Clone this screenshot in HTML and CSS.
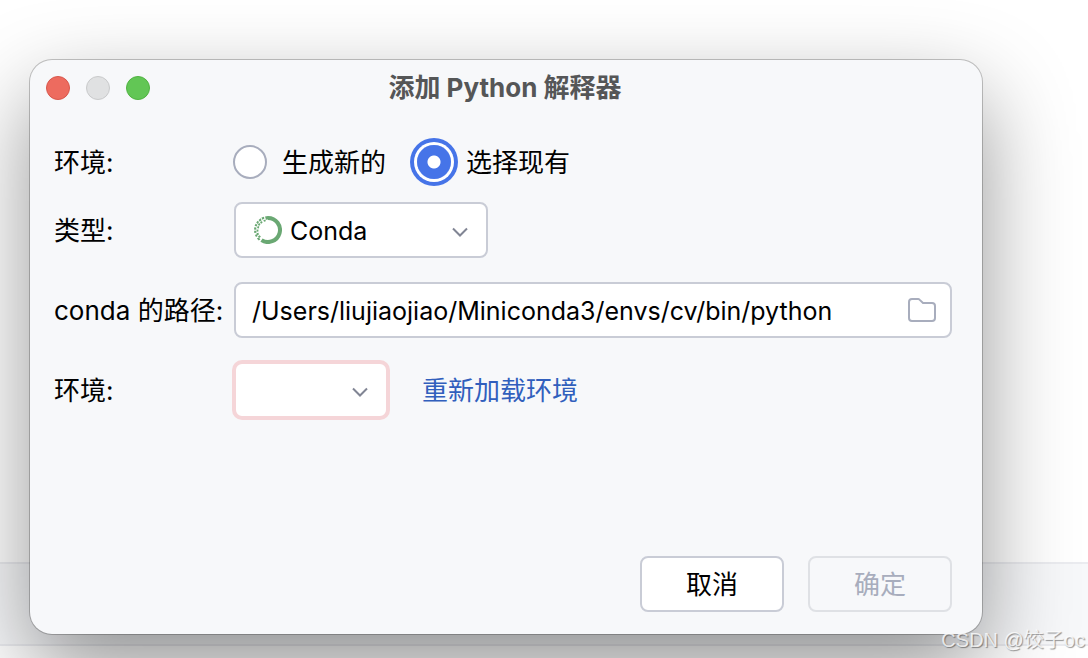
FILE: index.html
```html
<!DOCTYPE html>
<html lang="zh-CN">
<head>
<meta charset="utf-8">
<meta name="viewport" content="width=device-width, initial-scale=1">
<title>添加 Python 解释器</title>
<link rel="stylesheet" href="styles.css">
</head>
<body>
<div class="backdrop"></div>
<main class="dialog" role="dialog" aria-labelledby="dialog-title">
  <header class="titlebar">
    <div class="lights">
      <button class="light light-close" type="button" aria-label="关闭"></button>
      <button class="light light-min" type="button" aria-label="最小化" disabled></button>
      <button class="light light-zoom" type="button" aria-label="缩放"></button>
    </div>
    <h1 class="title" id="dialog-title">添加 Python 解释器</h1>
  </header>
  <form class="form">
    <div class="fields">
      <span class="label" id="mode-label">环境:</span>
      <div class="radios" role="radiogroup" aria-labelledby="mode-label">
        <label class="option"><input class="radio" type="radio" name="mode"><span class="text">生成新的</span></label>
        <label class="option"><input class="radio" type="radio" name="mode" checked><span class="text">选择现有</span></label>
      </div>

      <label class="label" for="type">类型:</label>
      <div class="row">
        <div class="picker picker-type">
          <select class="control select" id="type"><option>Conda</option></select>
          <svg class="conda" viewBox="0 0 28 28" aria-hidden="true">
            <path d="M14 2A12 12 0 1 1 7.500 24.100" fill="none" stroke="#6aa873" stroke-width="4"/>
            <g fill="#6aa873">
              <path d="M11 .4l3-.4v3.500l-2 .3zM7.500 1.600l2.500-.9.300 2-2 1zM9.300 4.200l2.200-.8.300 1.800-1.700.5zM4.600 4l2-1.700 1 2-1.700 1.400zM6 6.400l1.800-1.300.8 1.500-1.300 1.100zM2.200 6.500l1.500-1.700 1.300 1.300-1.200 1.800zM3.800 8.900l1.200-1.800 1.500 1-1 1.600zM.6 9.800l1-2 1.800.9-.7 1.900zM3 12.100l.8-2 1.500.5-.5 1.900zM0 13.500l.3-2.200 2 .3v2.100zM2.600 15.800v-2.100l1.800-.2v2zM.3 17l-.2-2.200h2l.4 2zM3 19.200l-.5-2 1.900-.5.600 1.800zM2 20.900l-1.100-2 1.700-.6 1.100 1.800zM5.200 22l-1.200-1.700 1.700-1 1.200 1.400zM4.800 24.500l-1.900-2 1.700-1 1.800 1.700z"/>
            </g>
          </svg>
          <svg class="chevron" viewBox="0 0 16 10" aria-hidden="true"><path d="M1 1.500l7 7 7-7"/></svg>
        </div>
      </div>

      <label class="label" for="path">conda 的路径:</label>
      <div class="picker picker-path">
        <input class="control input" id="path" type="text" value="/Users/liujiaojiao/Miniconda3/envs/cv/bin/python">
        <button class="browse" type="button" aria-label="浏览">
          <svg viewBox="0 0 28 24" aria-hidden="true"><path d="M1 4a3 3 0 0 1 3-3h6a2 2 0 0 1 1.500.6L15 5h9a3 3 0 0 1 3 3v12a3 3 0 0 1-3 3H4a3 3 0 0 1-3-3z"/></svg>
        </button>
      </div>

      <label class="label" for="env">环境:</label>
      <div class="row">
        <div class="picker picker-env">
          <select class="control select invalid" id="env" aria-invalid="true"><option></option></select>
          <svg class="chevron" viewBox="0 0 16 10" aria-hidden="true"><path d="M1 1.500l7 7 7-7"/></svg>
        </div>
        <a class="link" href="#">重新加载环境</a>
      </div>
    </div>
    <footer class="actions">
      <button class="button" type="button">取消</button>
      <button class="button" type="submit" disabled>确定</button>
    </footer>
  </form>
</main>
<div class="watermark">CSDN @饺子oc</div>
</body>
</html>
```
FILE: styles.css
```css
* {
  box-sizing: border-box;
}

body {
  position: relative;
  display: flex;
  min-height: 100vh;
  margin: 0;
  padding: 60px 106px 24px 30px;
  overflow: hidden;
  background: #fff;
  color: #000;
  font: 26px/32px Inter, "Noto Sans CJK SC", sans-serif;
}

button,
input,
select {
  margin: 0;
  font: inherit;
  color: inherit;
}

/* Panel of the window behind the dialog */
.backdrop {
  position: absolute;
  right: 0;
  bottom: 12px;
  left: 0;
  height: 84px;
  border-top: 2px solid #ebecf0;
  border-bottom: 2px solid #ebecf0;
  background: #f7f8fa;
}

.dialog {
  position: relative;
  display: flex;
  flex: 1;
  flex-direction: column;
  border-radius: 22px;
  background: #f7f8fa;
  box-shadow: 0 0 0 1px rgba(0, 0, 0, 0.22), 0 36px 90px rgba(0, 0, 0, 0.42);
}

.titlebar {
  display: grid;
  grid-template-columns: 1fr auto 1fr;
  align-items: center;
  height: 56px;
  padding: 0 18px 0 16px;
}

.lights {
  display: flex;
  gap: 16px;
}

.light {
  width: 24px;
  height: 24px;
  padding: 0;
  border: 1px solid;
  border-radius: 50%;
}

.light-close {
  border-color: #d8574c;
  background: #ed6b5f;
}

.light-min {
  border-color: #c9cacb;
  background: #e0e1e2;
}

.light-zoom {
  border-color: #50b341;
  background: #62c655;
}

.title {
  margin: 0;
  color: #555657;
  font-size: 26px;
  font-weight: 700;
}

.form {
  display: flex;
  flex: 1;
  flex-direction: column;
  padding: 30px 30px 22px 24px;
}

.fields {
  display: grid;
  grid-template-columns: 180px 1fr;
  grid-template-rows: 32px;
  gap: 24px 0;
  align-items: center;
}

.label,
.text,
.link {
  padding-top: 2px;
  white-space: nowrap;
}

.radios {
  display: flex;
  gap: 32px;
}

.option {
  display: flex;
  gap: 16px;
  align-items: center;
}

.radio {
  width: 34px;
  height: 34px;
  margin: -1px;
  border: 2px solid #a8adbd;
  border-radius: 50%;
  appearance: none;
  background: #fff;
}

.radio:checked {
  border: 0;
  background: radial-gradient(circle, #fff 6px, #4674e8 7px);
  box-shadow: 0 0 0 3px #fff, 0 0 0 7px #4674e8;
}

.row {
  display: flex;
  gap: 34px;
  align-items: center;
}

.picker {
  position: relative;
}

.picker-type {
  width: 254px;
}

.picker-env {
  width: 154px;
}

.control {
  display: block;
  width: 100%;
  height: 56px;
  padding: 2px 16px 0;
  border: 2px solid #c9ccd6;
  border-radius: 8px;
  appearance: none;
  background: #fff;
  font-size: 25px;
}

.picker-type .select {
  padding-left: 54px;
}

.input {
  padding-right: 56px;
}

.invalid {
  border-color: #f5d5d8;
  box-shadow: 0 0 0 2px #f5d5d8;
}

.conda {
  position: absolute;
  top: 14px;
  left: 20px;
  width: 28px;
  height: 28px;
  pointer-events: none;
}

.chevron {
  position: absolute;
  top: 25px;
  right: 20px;
  width: 16px;
  height: 10px;
  fill: none;
  stroke: #818594;
  stroke-width: 2;
  pointer-events: none;
}

.browse {
  position: absolute;
  top: 16px;
  right: 16px;
  width: 28px;
  height: 24px;
  padding: 0;
  border: 0;
  background: none;
}

.browse svg {
  display: block;
  fill: none;
  stroke: #a8adbd;
  stroke-width: 2;
}

.link {
  color: #315fbd;
  text-decoration: none;
}

.actions {
  display: flex;
  gap: 24px;
  justify-content: flex-end;
  margin-top: auto;
}

.button {
  width: 144px;
  height: 56px;
  padding: 2px 0 0;
  border: 2px solid #c9ccd6;
  border-radius: 8px;
  background: #fff;
}

.button:disabled {
  border-color: #dfe1e5;
  background: transparent;
  color: #a8adbd;
}

.watermark {
  position: absolute;
  right: 3px;
  bottom: 4px;
  color: rgba(255, 255, 255, 0.8);
  font: 20px/28px "Liberation Sans", "Noto Sans CJK SC", sans-serif;
  text-shadow: 1px 1px 1px rgba(0, 0, 0, 0.4);
}
```
